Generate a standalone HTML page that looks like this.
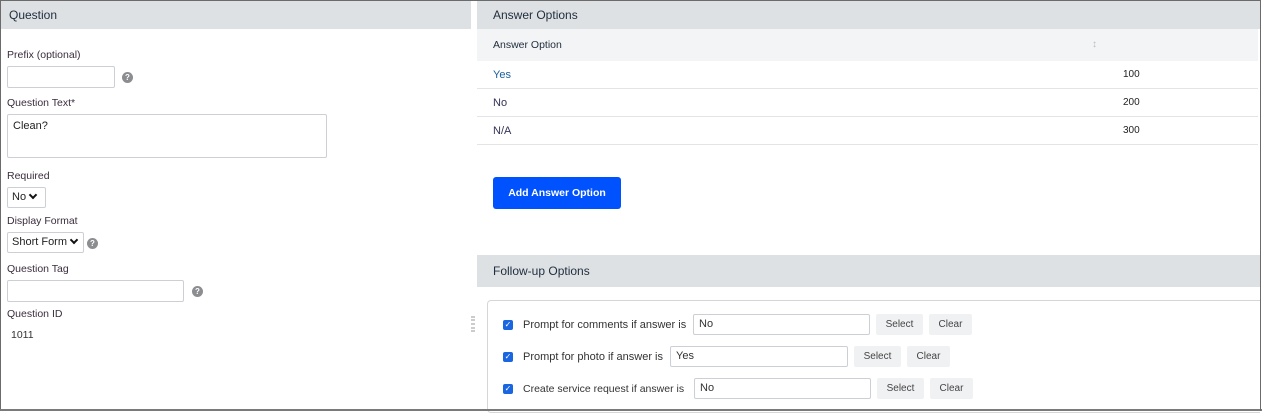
<!DOCTYPE html>
<html><head><style>
*{box-sizing:border-box}
body{margin:0;width:1270px;height:419px;background:#fff;font-family:"Liberation Sans",sans-serif;font-size:11px;color:#333;position:relative;overflow:hidden}
.abs{position:absolute}
.frame{left:0;top:0;width:1261px;height:411px;border:1px solid #6b6b6b;border-bottom:2px solid #7a7a7a}
.hdr{background:#dee1e4;height:29px;line-height:29px;font-size:12px;color:#1f2d3d;padding-left:8px}
.lbl{left:7px;color:#3a2d3d;font-size:10.5px}
.inp{border:1px solid #ccd0d4;border-radius:2px;background:#fff}
.help{width:11px;height:11px;border-radius:50%;background:#8b8d90;color:#fff;font-size:8px;font-weight:bold;text-align:center;line-height:11px}
.sel{border:1px solid #ccd0d4;border-radius:2px;height:21px;line-height:19px;padding-left:4px;font-size:11px;color:#222}
.row{left:477px;width:781px;height:28px;border-bottom:1px solid #e2e4e6;line-height:28px;padding-left:16px;color:#335}
.num{position:absolute;left:646px;top:0;color:#222;font-size:10px}
.btn{background:#f0f1f2;border-radius:2px;height:21px;line-height:21px;text-align:center;color:#444;font-size:10px}
.cb{width:10px;height:10px;background:#1a66e0;border-radius:2px;color:#fff;font-size:8px;line-height:10px;text-align:center}
.chev{display:inline-block;width:6px;height:6px;border-right:2px solid #111;border-bottom:2px solid #111;transform:rotate(45deg);margin-left:4px;position:relative;top:-2px}
</style></head><body>
<div class="abs frame"></div>
<div class="abs hdr" style="left:1px;top:1px;width:470px;height:28px">Question</div>
<div class="abs hdr" style="left:477px;top:1px;width:783px;height:28px;padding-left:16px">Answer Options</div>

<div class="abs lbl" style="top:49px">Prefix (optional)</div>
<div class="abs inp" style="left:7px;top:66px;width:108px;height:22px"></div>
<div class="abs help" style="left:122px;top:72px">?</div>
<div class="abs lbl" style="top:97px">Question Text*</div>
<div class="abs inp" style="left:7px;top:114px;width:320px;height:44px;padding:5px 5px;font-size:11px;color:#222">Clean?</div>
<div class="abs lbl" style="top:170px">Required</div>
<div class="abs sel" style="left:7px;top:187px;width:39px">No<span class="chev"></span></div>
<div class="abs lbl" style="top:215px">Display Format</div>
<div class="abs sel" style="left:7px;top:232px;width:77px">Short Form<span class="chev"></span></div>
<div class="abs help" style="left:87px;top:238px">?</div>
<div class="abs lbl" style="top:263px">Question Tag</div>
<div class="abs inp" style="left:7px;top:280px;width:177px;height:22px"></div>
<div class="abs help" style="left:192px;top:286px">?</div>
<div class="abs lbl" style="top:308px">Question ID</div>
<div class="abs" style="left:11px;top:329px;font-size:10.5px;color:#333">1011</div>

<div class="abs" style="left:477px;top:29px;width:781px;height:32px;background:#f3f4f5;line-height:32px;padding-left:16px;color:#1f2d3d;font-size:10.5px">Answer Option<span style="position:absolute;left:615px;color:#bbb;font-size:10px">&#x2195;</span></div>
<div class="abs row" style="top:61px;color:#1b5e9a">Yes<span class="num">100</span></div>
<div class="abs row" style="top:89px">No<span class="num">200</span></div>
<div class="abs row" style="top:117px">N/A<span class="num">300</span></div>
<div class="abs" style="left:493px;top:177px;width:128px;height:32px;background:#0052ff;border-radius:3px;color:#fff;text-align:center;line-height:32px;font-size:10.5px;font-weight:bold">Add Answer Option</div>

<div class="abs hdr" style="left:477px;top:255px;width:783px;height:32px;line-height:32px;padding-left:16px">Follow-up Options</div>
<div class="abs" style="left:487px;top:300px;width:790px;height:113px;border:1px solid #d4d7da;border-radius:4px"></div>
<div class="abs" style="left:1260px;top:290px;width:10px;height:129px;background:#fff"></div>
<div class="abs" style="left:471px;top:316px;width:4px;height:16px;border-left:2px dotted #ccc;border-right:2px dotted #ccc"></div>

<div class="abs cb" style="left:503px;top:320px">&#10003;</div>
<div class="abs" style="left:523px;top:319px;color:#333">Prompt for comments if answer is</div>
<div class="abs inp" style="left:693px;top:314px;width:177px;height:21px;line-height:19px;padding-left:5px">No</div>
<div class="abs btn" style="left:876px;top:314px;width:47px">Select</div>
<div class="abs btn" style="left:929px;top:314px;width:43px">Clear</div>

<div class="abs cb" style="left:503px;top:352px">&#10003;</div>
<div class="abs" style="left:523px;top:351px;color:#333">Prompt for photo if answer is</div>
<div class="abs inp" style="left:670px;top:346px;width:178px;height:21px;line-height:19px;padding-left:5px">Yes</div>
<div class="abs btn" style="left:854px;top:346px;width:47px">Select</div>
<div class="abs btn" style="left:907px;top:346px;width:43px">Clear</div>

<div class="abs cb" style="left:503px;top:384px">&#10003;</div>
<div class="abs" style="left:523px;top:383px;color:#333;font-size:10.5px">Create service request if answer is</div>
<div class="abs inp" style="left:694px;top:378px;width:177px;height:21px;line-height:19px;padding-left:5px">No</div>
<div class="abs btn" style="left:877px;top:378px;width:47px">Select</div>
<div class="abs btn" style="left:930px;top:378px;width:43px">Clear</div>
<div class="abs" style="left:0;top:409px;width:1262px;height:2px;background:#7a7a7a"></div>
<div class="abs" style="left:1260px;top:0;width:1px;height:411px;background:#6b6b6b"></div>
</body></html>
